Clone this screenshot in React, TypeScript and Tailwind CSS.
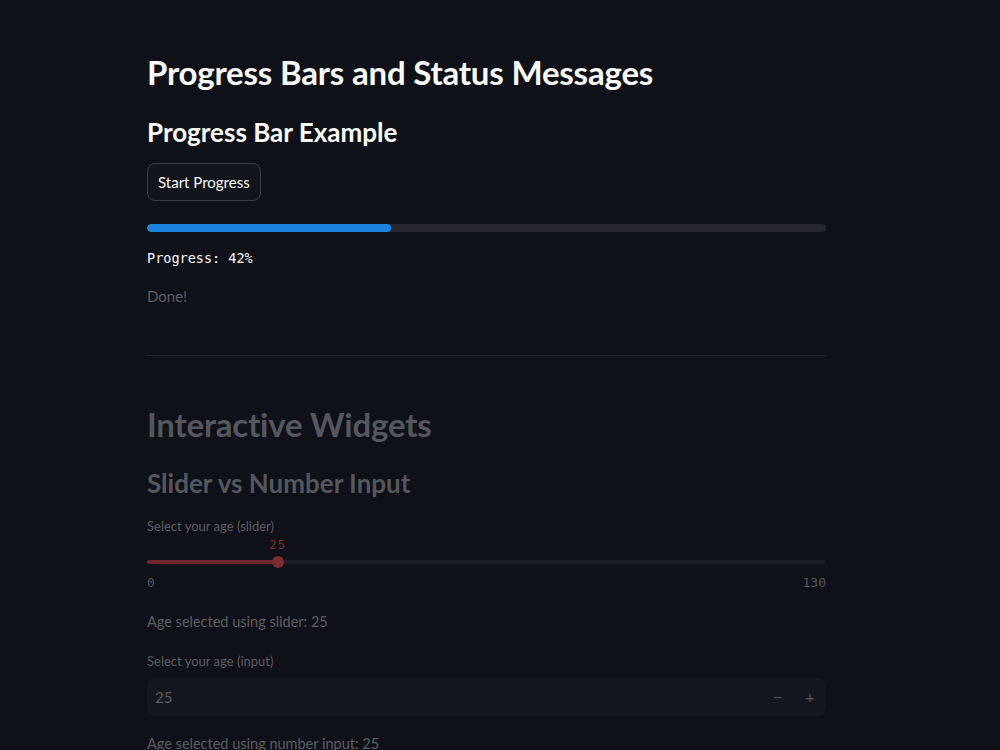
import React from "react";

const sans = "font-['Lato','Noto_Sans',sans-serif]";
const mono = "font-['DejaVu_Sans_Mono','Liberation_Mono',monospace]";

export default function App() {
  const pct = 36;
  const sliderPct = (25 / 130) * 100;
  return (
    <div className={`min-h-screen bg-[#0e1117] ${sans}`}>
      <div className="ml-[147px] w-[679px] pt-[52px] flex flex-col">
        <h1 className="h-[40px] leading-[40px] text-[33px] font-bold text-[#fafafa] tracking-[-0.2px]">
          Progress Bars and Status Messages
        </h1>
        <h2 className="mt-[23px] h-[34px] leading-[34px] text-[26px] font-bold text-[#fafafa]">
          Progress Bar Example
        </h2>
        <div className="mt-[14px] flex">
          <button className="h-[38px] px-[10px] rounded-lg border border-[#3b3d45] bg-[#12151c] text-[15px] text-[#fafafa]">
            Start Progress
          </button>
        </div>
        <div className="mt-[23px] h-2 w-full rounded-full bg-[#262730] overflow-hidden">
          <div className="h-full rounded-full bg-[#1c83e1]" style={{ width: `${pct}%` }} />
        </div>
        <div className={`mt-4 h-5 leading-5 text-[13.5px] text-[#fafafa] ${mono}`}>Progress: 42%</div>
        <div className="mt-[18px] h-5 leading-5 text-[15px] text-[#5c5e63]">Done!</div>
        <div className="mt-[49px] h-px w-full bg-[#22242c]" />
        <h1 className="mt-[48px] h-[40px] leading-[40px] text-[33px] font-bold text-[#54575d] tracking-[-0.2px]">
          Interactive Widgets
        </h1>
        <h2 className="mt-[22px] h-[34px] leading-[34px] text-[26px] font-bold text-[#54575d]">
          Slider vs Number Input
        </h2>
        <div className="mt-[16px] h-5 leading-5 text-[13px] text-[#5c5e63]">Select your age (slider)</div>
        <div className="relative h-[58px]">
          <div
            className={`absolute top-0 h-[18px] leading-[18px] text-[13px] tracking-[1px] text-[#7a2b30] -translate-x-1/2 ${mono}`}
            style={{ left: `${sliderPct}%` }}
          >
            25
          </div>
          <div className="absolute top-[24px] left-0 right-0 h-1 rounded-full bg-[#1c1e25]" />
          <div
            className="absolute top-[24px] left-0 h-1 rounded-full bg-[#6f262b]"
            style={{ width: `${sliderPct}%` }}
          />
          <div
            className="absolute top-[20px] w-3 h-3 rounded-full bg-[#7d2c31] -translate-x-1/2"
            style={{ left: `${sliderPct}%` }}
          />
          <div className={`absolute top-[38px] left-0 right-0 flex justify-between text-[13px] leading-[18px] text-[#55585d] ${mono}`}>
            <span>0</span>
            <span>130</span>
          </div>
        </div>
        <div className="mt-[18px] h-5 leading-5 text-[14.5px] text-[#5c5e63]">Age selected using slider: 25</div>
        <div className="mt-[19px] h-5 leading-5 text-[13px] text-[#5c5e63]">Select your age (input)</div>
        <div className="mt-[7px] h-[38px] w-full rounded-lg bg-[#15171e] flex items-center pl-2">
          <span className="flex-1 text-[15px] text-[#5c5e63]">25</span>
          <span className="w-8 text-center text-[16px] text-[#55585d]">−</span>
          <span className="w-8 text-center text-[16px] text-[#55585d]">+</span>
        </div>
        <div className="mt-[18px] h-5 leading-5 text-[14.5px] text-[#5c5e63]">Age selected using number input: 25</div>
      </div>
    </div>
  );
}
